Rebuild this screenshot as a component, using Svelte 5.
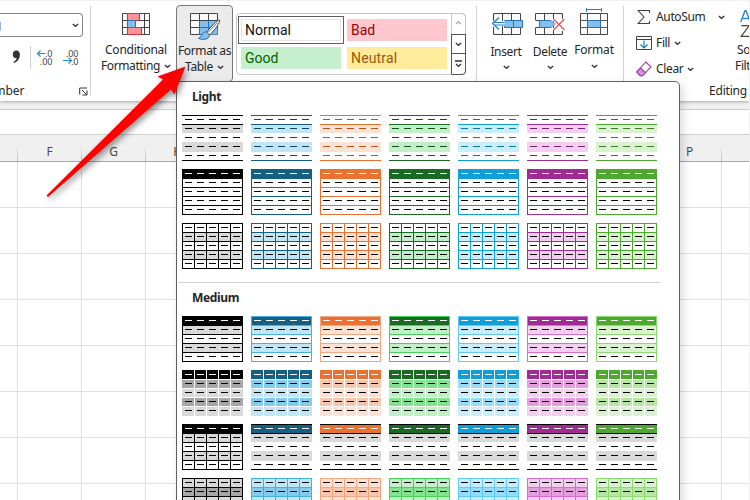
<script lang="ts">
	type Theme = {
		name: string;
		base: string;
		text: string;
		light: string;
		mid: string;
		edge: string;
	};

	type Style = 'lines' | 'boxed' | 'grid' | 'banded' | 'blocks' | 'plain' | 'shaded';

	const themes: Theme[] = [
		{ name: 'Black', base: '#000000', text: '#000000', light: '#d9d9d9', mid: '#a6a6a6', edge: '#000000' },
		{ name: 'Dark blue', base: '#156082', text: '#0f4761', light: '#c0e6f5', mid: '#83cceb', edge: '#44b3e1' },
		{ name: 'Orange', base: '#e97132', text: '#be5014', light: '#fbe2d5', mid: '#f7c7ac', edge: '#f1a983' },
		{ name: 'Dark green', base: '#196b24', text: '#124f1a', light: '#c1f0c8', mid: '#83e28e', edge: '#47d359' },
		{ name: 'Blue', base: '#0f9ed5', text: '#0b769f', light: '#caedfb', mid: '#94dcf8', edge: '#61cbf3' },
		{ name: 'Purple', base: '#a02b93', text: '#78206e', light: '#f2ceef', mid: '#e49edd', edge: '#d86dcd' },
		{ name: 'Green', base: '#4ea72e', text: '#3c7d22', light: '#daf2d0', mid: '#b5e6a2', edge: '#8ed973' }
	];

	const sections: { title: string; rows: Style[] }[] = [
		{ title: 'Light', rows: ['lines', 'boxed', 'grid'] },
		{ title: 'Medium', rows: ['banded', 'blocks', 'plain', 'shaded'] }
	];

	const five = [0, 1, 2, 3, 4];
	const columns = ['F', 'G', 'H', 'I', 'J', 'K', 'L', 'M', 'N', 'O', 'P', ''];
	const gridRows = [0, 1, 2, 3, 4, 5, 6, 7];

	// background of one row in a thumbnail
	function rowFill(style: Style, t: Theme, row: number) {
		const odd = row % 2 === 1;
		if (style === 'shaded') return odd ? t.mid : t.light;
		if (row === 0) return style === 'lines' || style === 'grid' ? '#fff' : t.base;
		if (style === 'blocks') return odd ? t.mid : t.light;
		if (style === 'boxed') return '#fff';
		if (style === 'plain') return odd ? '#d9d9d9' : '#fff';
		return odd ? t.light : '#fff';
	}

	function rules(style: Style, t: Theme) {
		const isBlack = t.name === 'Black';
		if (style === 'blocks') return { color: '#fff', h: [9, 18, 27, 36], v: [12, 24, 36, 48] };
		if (style === 'lines') return { color: t.base, h: [0, 9, 45], v: [] };
		if (style === 'boxed') return { color: t.base, h: [0, 9, 18, 27, 36, 45], v: [0, 60] };
		if (style === 'banded') return { color: t.edge, h: [0, 9, 18, 27, 36, 45], v: [0, 60] };
		if (style === 'plain' && !isBlack) return { color: '#000', h: [0, 9, 45], v: [] };
		return {
			color: style === 'shaded' ? t.edge : t.base,
			h: [0, 9, 18, 27, 36, 45],
			v: [0, 12, 24, 36, 48, 60]
		};
	}

	function dash(style: Style, t: Theme, row: number) {
		if (style === 'lines') return t.text;
		return row === 0 && style !== 'grid' && style !== 'shaded' ? '#fff' : '#000';
	}
</script>

{#snippet chevron()}
	<svg class="chevron" width="7" height="5" viewBox="0 0 7 5"><path d="M.8 1l2.700 2.300L6.200 1" /></svg>
{/snippet}

{#snippet thumb(style: Style, t: Theme)}
	{@const r = rules(style, t)}
	<svg class="thumb" width="61" height="46" viewBox="0 0 61 46" shape-rendering="crispEdges">
		{#each five as row}
			<rect x="0" y={row * 9} width="61" height="10" fill={rowFill(style, t, row)} />
		{/each}
		{#if style === 'lines' || style === 'plain'}
			<rect x="0" y="27" width="61" height="10" fill={rowFill(style, t, 3)} />
		{/if}
		{#each r.h as y}
			<rect x="0" {y} width="61" height="1" fill={r.color} />
		{/each}
		{#each r.v as x}
			<rect {x} y="0" width="1" height="46" fill={r.color} />
		{/each}
		{#if style === 'plain' && t.name === 'Black'}
			<rect width="61" height="10" />
		{/if}
		{#each five as row}
			{#each five as col}
				<rect x={3 + col * 12} y={4 + row * 9} width="7" height="1" fill={dash(style, t, row)} />
			{/each}
		{/each}
	</svg>
{/snippet}

<div class="excel">
	<div class="ribbon">
		<div class="group number">
			<div class="combo"><span class="combo-text">g</span>{@render chevron()}</div>
			<div class="decimals">
				<svg width="90" height="24" viewBox="0 0 90 24">
					<path d="M16.300 4.500c2.300 0 3.600 1.800 3.600 4.300 0 4-2.500 7-5.800 8.200l-.7-1.100c1.800-.9 3-2.300 3.200-3.900-2.100.5-3.800-1-3.800-3.600 0-2.300 1.400-3.900 3.500-3.900z" fill="#333" />
					<path d="M30.500 0v23" stroke="#d0d0d0" />
					<g class="digits">
						<text x="45" y="10.500">.0</text>
						<text x="40" y="18.500">.00</text>
						<text x="66" y="10.500">.00</text>
						<text x="71" y="18.500">.0</text>
					</g>
					<g class="blue-line">
						<path d="M37.500 7.500h8M40.500 4.500l-3 3 3 3" />
						<path d="M63 14.500h8.500M68.500 11.500l3 3-3 3" />
					</g>
				</svg>
			</div>
			<div class="caption">
				<span class="number-label">Number</span>
				<svg width="9" height="9" viewBox="0 0 9 9"><path d="M8 1H.7v6.500M3 3l4.500 4.500M8 3.500V8H3.500" fill="none" stroke="#333" /></svg>
			</div>
		</div>

		<div class="group styles">
			<div class="big conditional">
				<svg width="28" height="22" viewBox="0 0 28 22">
					<path d="M.5.5h27v21H.5zM22.500.5v21M5.500.5v21M.5 7.500h27M.5 14.500h27" fill="#fafafa" stroke="#444" />
					<g stroke="#d13438" fill="#ff9199">
						<path d="M5.500.5h12v7h-12zM5.500 14.500h14v7h-14z" />
					</g>
					<path d="M5.500 7.500h8v7h-8z" fill="#83beec" stroke="#2372ba" />
				</svg>
				<span>Conditional</span>
				<span>Formatting {@render chevron()}</span>
			</div>
			<div class="big format-table">
				<svg width="32" height="28" viewBox="0 0 32 28">
					<path d="M.5.5h27v21H.5z" fill="#fafafa" stroke="#444" />
					<path d="M9.500 7h18v14.500h-18z" fill="#83beec" />
					<path d="M9.500.5v21M18.500.5v21M.5 7.500h27M.5 14.500h27" fill="none" stroke="#444" />
					<path d="M9.500 14.500h18M18.500 7.500v14M9.500 7.500v14h9M27.500 7v10" fill="none" stroke="#2372ba" />
					<path d="M29.600 7.200c-2-.8-9.500 7.200-13 12l3 2.800c4.700-4.500 11.400-13.300 10-14.800z" fill="#fff" stroke="#444" />
					<path d="M27.800 9.400L18.500 19" stroke="#444" fill="none" stroke-width=".8" />
					<path d="M16.400 18.900c-5-.5-4 5.500-8 6.300 4 2.300 10.800 1.500 11.200-3.200z" fill="#83beec" stroke="#2372ba" />
				</svg>
				<span>Format as</span>
				<span>Table {@render chevron()}</span>
			</div>
			<div class="gallery">
				<div class="cells">
					<div class="cell normal">Normal</div>
					<div class="cell bad">Bad</div>
					<div class="cell good">Good</div>
					<div class="cell neutral">Neutral</div>
				</div>
				<div class="scroller">
					<div class="step off"><svg class="chevron" width="7" height="5" viewBox="0 0 7 5"><path d="M1 4l2.500-2.300L6 4" /></svg></div>
					<div class="step">{@render chevron()}</div>
					<div class="step"><svg class="chevron" width="7" height="8" viewBox="0 0 7 8"><path d="M0 1h7M1 4l2.500 2.300L6 4" /></svg></div>
				</div>
			</div>
		</div>

		<div class="group cell-tools">
			<div class="big">
				<svg width="34" height="22" viewBox="0 0 34 22">
					<path d="M2.500 8V.5h27V8M2.500 14v7.500h27V14M11.500.5v21M20.500.5v21" fill="#fafafa" stroke="#444" />
					<path d="M13.500 7.500h18v7h-18z" fill="#83beec" stroke="#2372ba" />
					<path d="M22.500 7.500v7" stroke="#2372ba" />
					<path d="M3 10.500h11" stroke="#fff" stroke-width="5" />
					<path d="M8 4.500L1.500 10.500 8 16.500M3 9.500h11M3 12h11" fill="none" stroke="#2080c8" stroke-width="1.200" />
				</svg>
				<span class="low">Insert</span>
				{@render chevron()}
			</div>
			<div class="big">
				<svg width="34" height="22" viewBox="0 0 34 22">
					<path d="M2.500 7V.5h27V6M2.500 15v6.500h27V18M11.500.5v21M20.500.5v21M2.500 7.500h5M2.500 14.500h5" fill="#fafafa" stroke="#444" />
					<path d="M6.500 7.500h11l5 3.500-5 3.500h-11z" fill="#83beec" stroke="#2372ba" />
					<path d="M18 7.500l4 3.500-4 3.500" fill="none" stroke="#83beec" />
					<path d="M20.500 6l11 11M31.500 6l-11 11" stroke="#fff" stroke-width="3" />
					<path d="M20.500 6l11 11M31.500 6l-11 11" stroke="#ee4b4b" stroke-width="1.200" />
				</svg>
				<span class="low">Delete</span>
				{@render chevron()}
			</div>
			<div class="big format">
				<svg width="28" height="27" viewBox="0 0 28 27">
					<path d="M.5 5.500h27v21H.5z" fill="#fafafa" stroke="#444" />
					<path d="M7.500 5.500v21M20.500 5.500v21M.5 12.500h27M.5 19.500h27" stroke="#555" />
					<path d="M7.500 12.500h13v7h-13z" fill="#83beec" stroke="#2372ba" />
					<path d="M6.500 0v4M21.500 0v4M6.500 1.500h15" stroke="#2080c8" />
				</svg>
				<span>Format</span>
				{@render chevron()}
			</div>
		</div>

		<div class="group editing">
			<div class="commands">
				<div class="command">
					<svg width="16" height="16" viewBox="0 0 16 16"><path d="M13.500 4V1.500H2.200L8 8l-5.800 6.500h11.300V12" fill="none" stroke="#444" stroke-width="1.100" /></svg>
					<span>AutoSum</span>
					<i class="wide"></i>{@render chevron()}
				</div>
				<div class="command">
					<svg width="16" height="16" viewBox="0 0 16 16">
						<path d="M.5 1.500h15v13H.5zM.5 4.500h15" fill="#fafafa" stroke="#444" />
						<path d="M8 5.500V13M4.500 9.500L8 13l3.500-3.500" fill="none" stroke="#2080c8" stroke-width="1.200" />
					</svg>
					<span>Fill</span>{@render chevron()}
				</div>
				<div class="command">
					<svg width="16" height="16" viewBox="0 0 16 16">
						<path d="M9.800 1L15 6 6.300 14.800H4.200L.8 11z" fill="#fafafa" stroke="#9b3fa5" stroke-width="1.100" />
						<path d="M4.400 7l5.200 4.800-3.300 3H4.200L.8 11z" fill="#d192d8" stroke="#9b3fa5" stroke-width="1.100" />
					</svg>
					<span>Clear</span>{@render chevron()}
				</div>
			</div>
			<div class="sort">
				<svg width="18" height="28" viewBox="0 0 18 28">
					<path d="M.7 12L5 .8h1L10.300 12M2.200 8.500h6.500" fill="none" stroke="#2888d0" stroke-width="1.400" />
					<path d="M1.300 15.700h8L1.200 26.300h9" fill="none" stroke="#444" stroke-width="1.200" />
				</svg>
				<span>Sort &amp;</span>
				<span class="filter">Filter</span>
			</div>
			<div class="editing-label">Editing</div>
		</div>
	</div>

	<div class="formula-bar"></div>

	<div class="sheet">
		<div class="headers">
			<div class="corner"></div>
			{#each columns as column}
				<div class="header">{column}</div>
			{/each}
		</div>
		{#each gridRows as _}
			<div class="row">
				<div class="corner"></div>
				{#each columns as _column}
					<div class="box"></div>
				{/each}
			</div>
		{/each}
	</div>

	<div class="menu">
		{#each sections as section}
			<section>
				<h2>{section.title}</h2>
				<div class="thumbs">
					{#each section.rows as style}
						{#each themes as theme}
							{@render thumb(style, theme)}
						{/each}
					{/each}
				</div>
			</section>
		{/each}
	</div>

	<svg class="arrow" width="170" height="160" viewBox="30 50 170 160">
		<path d="M185.500 66.500L157.500 76.500L163 79.500L46.500 195.500L48 197L171 89.500L174.500 94.500Z" fill="#fe0000" />
	</svg>
</div>

<style>
	:global(body) {
		margin: 0;
	}

	.excel {
		position: relative;
		width: 750px;
		height: 500px;
		overflow: hidden;
		box-sizing: border-box;
		background: #f0f0f0;
		font-family: 'Noto Sans', 'Open Sans', sans-serif;
		font-size: 12px;
		line-height: 16px;
		letter-spacing: -0.35px;
		color: #262626;
	}

	svg {
		display: block;
		flex: none;
	}

	.ribbon {
		display: flex;
		width: 749px;
		height: 100px;
		margin-top: 1px;
		background: #fff;
		box-shadow: 0 1px 3px rgba(0, 0, 0, 0.3);
		overflow: hidden;
		clip-path: inset(0 0 -6px 0);
	}

	.group {
		position: relative;
		flex: none;
		box-sizing: border-box;
		height: 100px;
	}

	.group:not(.editing)::after {
		content: '';
		position: absolute;
		right: 0;
		top: 5px;
		width: 1px;
		height: 89px;
		background: #d1d1d1;
	}

	.chevron {
		display: inline-block;
		fill: none;
		stroke: #333;
		stroke-width: 1.3;
	}

	.number {
		width: 91px;
		padding-top: 12px;
	}

	.combo {
		display: flex;
		align-items: center;
		justify-content: space-between;
		width: 83px;
		height: 24px;
		box-sizing: border-box;
		padding-right: 3px;
		border: 1px solid #888;
		border-left: 0;
		border-radius: 0 4px 4px 0;
	}

	.combo-text {
		margin-left: -6px;
		color: #6b2fa0;
	}

	.decimals {
		margin-top: 9px;
	}

	.digits {
		font-size: 9px;
		letter-spacing: -0.2px;
		fill: #444;
	}

	.blue-line {
		fill: none;
		stroke: #2888d0;
		stroke-width: 1.2;
	}

	.caption {
		display: flex;
		align-items: center;
		gap: 57px;
		margin: 13px 0 0 -22px;
		letter-spacing: -0.1px;
	}

	.number-label {
		width: 44px;
		text-align: right;
	}

	.styles {
		display: flex;
		width: 386px;
		padding-left: 5px;
	}

	.big {
		display: flex;
		flex-direction: column;
		align-items: center;
		box-sizing: border-box;
		padding-top: 12px;
		white-space: nowrap;
	}

	.big > svg:first-child + span {
		margin-top: 7px;
	}

	.conditional {
		width: 80px;
		letter-spacing: -0.25px;
	}

	.conditional > span:last-child,
	.format-table > span:last-child {
		display: flex;
		align-items: center;
		gap: 4px;
	}

	.conditional > span:last-child {
		letter-spacing: -0.4px;
	}

	.format-table {
		width: 57px;
		height: 77px;
		margin-top: 4px;
		padding-top: 7px;
		border: 1px solid #777;
		border-radius: 4px;
		background: #ebebeb;
	}

	.format-table > svg:first-child {
		margin: 0 0 -5px 2px;
	}

	.gallery {
		display: flex;
		width: 230px;
		height: 62px;
		margin: 12px 0 0 3px;
		box-sizing: border-box;
		border: 1px solid #c8c8c8;
		border-radius: 4px;
	}

	.cells {
		display: grid;
		grid-template-columns: 100px 100px;
		grid-template-rows: 22px 22px;
		gap: 6px;
		width: 214px;
		box-sizing: border-box;
		padding: 5px 0 0 4px;
		font-family: Roboto, sans-serif;
		font-size: 14px;
		line-height: 22px;
		letter-spacing: 0;
	}

	.cell {
		padding-left: 4px;
	}

	.normal {
		color: #111;
		outline: 2px solid #fff;
		box-shadow: 0 0 0 3px #606060, inset 0 0 0 1px #e4e4e4;
	}

	.bad {
		background: #ffc7ce;
		color: #9c0006;
	}

	.good {
		background: #c6efce;
		color: #006100;
	}

	.neutral {
		background: #ffeb9c;
		color: #9c5700;
		letter-spacing: 0.15px;
	}

	.scroller {
		display: flex;
		flex-direction: column;
		width: 15px;
		margin: -1px -1px -1px 0;
	}

	.step {
		display: flex;
		align-items: center;
		justify-content: center;
		height: 20px;
		box-sizing: border-box;
		border: 1px solid #555;
		margin-bottom: -1px;
	}

	.step:last-child {
		height: 22px;
		margin-bottom: 0;
		border-radius: 0 0 4px 0;
	}

	.step.off {
		height: 22px;
		padding-bottom: 4px;
		border-color: #c8c8c8;
		border-radius: 0 4px 0 0;
	}

	.step.off .chevron {
		stroke: #aaa;
	}

	.cell-tools {
		display: flex;
		width: 147px;
		padding-left: 7px;
	}

	.cell-tools .big {
		width: 44px;
	}

	.cell-tools .big:first-child > svg:first-child {
		margin-left: 3px;
	}

	.cell-tools .big > svg:first-child + span.low {
		margin-top: 9px;
	}

	.cell-tools .big > .chevron {
		margin-top: 5px;
	}

	.cell-tools .big.format {
		width: 44px;
		padding-top: 7px;
		letter-spacing: -0.2px;
	}

	.cell-tools .big.format > .chevron {
		margin-top: 6px;
	}

	.editing {
		display: grid;
		grid-template-columns: 100px 60px;
		grid-template-rows: 81px 19px;
		width: 126px;
		padding-left: 12px;
	}

	.commands {
		display: flex;
		flex-direction: column;
		gap: 10px;
		padding-top: 8px;
	}

	.command {
		display: flex;
		align-items: center;
		gap: 4px;
		height: 16px;
	}

	.wide {
		width: 5px;
	}

	.sort {
		display: flex;
		flex-direction: column;
		padding: 9px 0 0 1px;
		white-space: nowrap;
	}

	.sort svg {
		margin: 0 0 4px 3px;
	}

	.sort .filter {
		margin-left: -2px;
	}

	.editing-label {
		padding: 1px 0 0 73px;
		letter-spacing: -0.2px;
	}

	.formula-bar {
		width: 749px;
		height: 24px;
		margin-top: 8px;
		border-top: 1px solid #cfcfcf;
		border-bottom: 1px solid #cfcfcf;
		background: #fff;
	}

	.sheet {
		width: 749px;
		overflow: hidden;
	}

	.headers,
	.row {
		display: flex;
	}

	.headers {
		height: 26px;
		border-bottom: 1px solid #a6a6a6;
	}

	.corner,
	.header,
	.box {
		flex: none;
		box-sizing: border-box;
		width: 64px;
	}

	.headers .corner,
	.row .corner {
		width: 18px;
	}

	.headers > div {
		border-right: 1px solid;
		border-image: linear-gradient(transparent 35%, #bdbdbd) 1;
	}

	.header {
		padding-top: 9px;
		text-align: center;
		color: #4a4a4a;
	}

	.row > div {
		height: 46px;
		border-right: 1px solid #e0e0e0;
		border-bottom: 1px solid #e0e0e0;
		background: #fff;
	}

	.menu {
		position: absolute;
		left: 176px;
		top: 81px;
		width: 504px;
		height: 440px;
		box-sizing: border-box;
		border: 1px solid #606060;
		border-radius: 0 5px 0 0;
		background: #fff;
		box-shadow: 3px 3px 9px rgba(0, 0, 0, 0.14);
	}

	section {
		width: 483px;
		margin-left: 1px;
		padding-bottom: 13px;
		border-bottom: 1px solid #d1d1d1;
	}

	h2 {
		margin: 0;
		padding: 7px 14px 10px;
		font-size: 12px;
		font-weight: 700;
		line-height: 16px;
	}

	.thumbs {
		display: grid;
		grid-template-columns: repeat(7, 61px);
		gap: 8px;
		margin-left: 4px;
	}

	.arrow {
		position: absolute;
		left: 30px;
		top: 50px;
		filter: drop-shadow(2px 3px 3px rgba(0, 0, 0, 0.45));
	}
</style>
